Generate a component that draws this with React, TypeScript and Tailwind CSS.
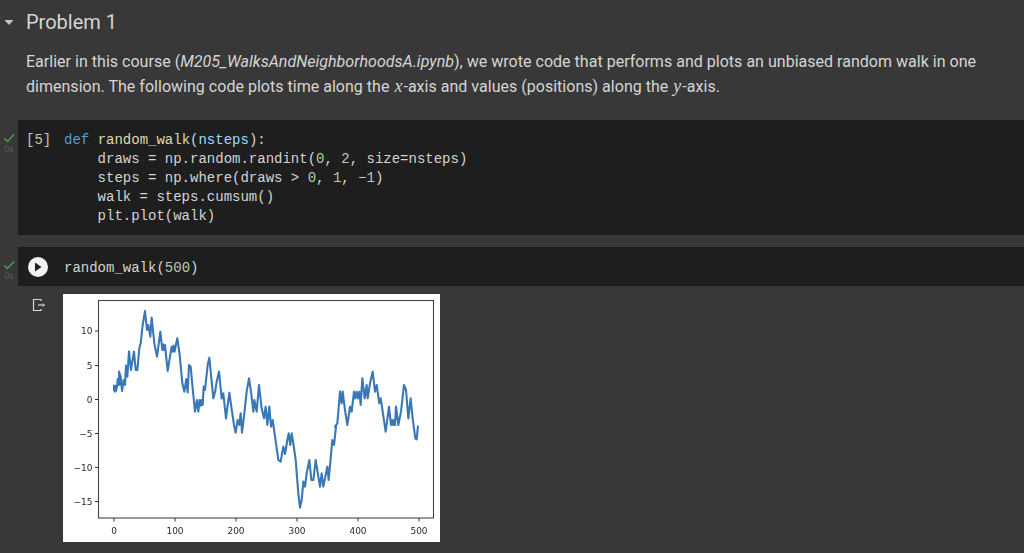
import React from "react";

type P = [number, number];
const z = (ox: number, oy: number, pts: P[]): P[] => pts.map(([x, y]) => [ox + x / 3, oy + y / 3]);

const walk: P[] = [
  ...z(105, 305, [[27,258],[27,242],[30,260],[33,242],[33,258],[37,240],[38,222],[43,240],[42,200],[47,215],[51,258],[56,225],[60,240],[63,182],[67,215],[72,140],[78,195],[82,170],[87,140],[92,195],[97,195],[103,130],[107,115],[113,60],[120,18],[126,75],[130,60],[136,95],[140,38],[148,115],[156,155],[166,80],[172,135],[175,118],[178,135],[180,120],[188,198],[195,155],[200,125],[203,140],[206,122],[209,140],[212,122],[217,100],[224,150],[232,235],[238,260],[244,222],[248,262],[252,180],[257,185],[263,250],[270,320],[276,285],[280,320],[284,285],[287,302],[290,285],[293,300],[296,245],[300,255],[308,180],[313,158],[320,230],[325,280],[330,262]]),
  ...z(190, 350, [[80,95],[87,65],[95,145],[100,130],[108,205],[118,128],[126,185],[132,225],[137,248],[143,210],[148,225],[152,190],[156,248],[163,190],[170,125],[177,85],[183,125],[190,185],[193,150],[200,185],[207,105],[215,175],[222,205],[227,170],[232,225],[238,170],[243,230],[248,210],[258,280],[265,330],[272,335],[280,290],[285,312],[292,270],[296,250],[301,285],[305,250],[310,280],[317,330]]),
  ...z(270, 410, [[85,250],[90,293],[95,270],[100,215],[105,230],[110,190],[118,150],[124,210],[130,210],[137,150],[145,200],[150,230],[155,190],[160,230],[165,205],[172,170],[176,210],[187,90],[192,105],[198,50]]),
  ...z(330, 360, [[15,200],[22,190],[30,95],[35,130],[38,95],[45,150],[52,195],[60,140],[65,155],[72,95],[76,115],[80,95],[84,115],[88,95],[92,135],[97,55],[104,115],[110,75],[113,115],[120,70],[128,35],[135,95],[140,75],[148,130],[152,115],[158,155],[167,215],[177,140],[183,195],[186,180],[189,195],[192,180],[195,195],[198,140],[205,195],[213,155],[222,75],[228,90],[235,175],[242,115],[248,175],[256,235],[260,238],[264,197]]),
];

const yTicks: [number, string][] = [[331, "10"], [365.5, "5"], [399.5, "0"], [433.5, "−5"], [467.5, "−10"], [501.5, "−15"]];
const xTicks: [number, string][] = [[114, "0"], [175, "100"], [236, "200"], [297, "300"], [358, "400"], [419, "500"]];

function Plot() {
  return (
    <svg viewBox="63 294 377 248" className="w-[377px] h-[248px] bg-white block" style={{ filter: "blur(0.4px)" }}>
      <rect x="98.5" y="300.5" width="335" height="217.5" fill="none" stroke="#444" strokeWidth="1.1" />
      {yTicks.map(([y, t]) => (
        <g key={t}>
          <line x1="95" x2="98.5" y1={y} y2={y} stroke="#333" strokeWidth="1" />
          <text x="92.5" y={y + 3.2} textAnchor="end" fontSize="9" fill="#2a2a2a" fontFamily="DejaVu Sans">{t}</text>
        </g>
      ))}
      {xTicks.map(([x, t]) => (
        <g key={t}>
          <line x1={x} x2={x} y1="518" y2="521.5" stroke="#333" strokeWidth="1" />
          <text x={x} y="534" textAnchor="middle" fontSize="9" fill="#2a2a2a" fontFamily="DejaVu Sans">{t}</text>
        </g>
      ))}
      <polyline points={walk.map((p) => p.join(",")).join(" ")} fill="none" stroke="#3a78b5" strokeWidth="2.1" strokeLinejoin="round" />
    </svg>
  );
}

function Status() {
  return (
    <div className="w-[18px] shrink-0 flex flex-col items-center pt-[13px]">
      <svg width="12" height="10" viewBox="0 0 12 10" fill="none">
        <path d="M1.5 5.5 L4.5 8.5 L11 1.5" stroke="#4caf50" strokeWidth="1.2" />
      </svg>
      <span className="text-[9px] leading-[10px] mt-[1px] text-[#5a5a5a] font-['Roboto',sans-serif]">0s</span>
    </div>
  );
}

const K = ({ c, children }: { c: string; children: React.ReactNode }) => <span className={c}>{children}</span>;

export default function App() {
  return (
    <div className="w-[1024px] h-[553px] overflow-hidden bg-[#383838] flex flex-col font-['Roboto',sans-serif]">
      <div className="h-[44px] shrink-0 flex items-center">
        <svg width="26" height="44" viewBox="0 0 26 44" className="shrink-0">
          <path d="M4.5 20 L13.5 20 L9 25 Z" fill="#c4c4c4" />
        </svg>
        <h1 className="text-[20px] text-[#d5d5d5] font-normal">Problem 1</h1>
      </div>
      <p className="pl-[26px] pt-[5px] text-[16px] leading-[25px] text-[#d5d5d5] whitespace-pre shrink-0 tracking-[0.02px]">
        Earlier in this course (<em>M205_WalksAndNeighborhoodsA.ipynb</em>), we wrote code that performs and plots an unbiased random walk in one{"\n"}
        dimension. The following code plots time along the <em className="font-['Liberation_Serif',serif] text-[18px] px-[1px]">x</em>-axis and values (positions) along the <em className="font-['Liberation_Serif',serif] text-[18px] px-[1px]">y</em>-axis.
      </p>

      <div className="flex mt-[21px] shrink-0">
        <Status />
        <div className="flex-1 bg-[#1e1e1e] h-[115px] flex pt-[11px] text-[14px] leading-[19px] text-[#d4d4d4] font-['Liberation_Mono',monospace]">
          <span className="w-[46px] pl-[8px] shrink-0 text-[#c4c4c4]">[5]</span>
          <pre className="font-['Liberation_Mono',monospace]">
            <K c="text-[#569cd6]">def</K> <K c="text-[#dcdcaa]">random_walk</K>(<K c="text-[#9cdcfe]">nsteps</K>):{"\n"}
            {"    "}draws = np.random.randint(<K c="text-[#b5cea8]">0</K>, <K c="text-[#b5cea8]">2</K>, size=nsteps){"\n"}
            {"    "}steps = np.where(draws &gt; <K c="text-[#b5cea8]">0</K>, <K c="text-[#b5cea8]">1</K>, <K c="text-[#b5cea8]">−1</K>){"\n"}
            {"    "}walk = steps.cumsum(){"\n"}
            {"    "}plt.plot(walk)
          </pre>
        </div>
      </div>

      <div className="flex mt-[12px] shrink-0">
        <Status />
        <div className="flex-1 bg-[#1e1e1e] h-[39px] flex items-center text-[14px] text-[#d4d4d4] font-['Liberation_Mono',monospace]">
          <div className="w-[46px] shrink-0 pl-[10px]">
            <div className="w-[20px] h-[20px] rounded-full bg-[#f2f2f2] flex items-center justify-center">
              <svg width="8" height="10" viewBox="0 0 8 10"><path d="M1 0.5 L7.5 5 L1 9.5 Z" fill="#1e1e1e" /></svg>
            </div>
          </div>
          <span className="pt-[3px]">random_walk(<K c="text-[#b5cea8]">500</K>)</span>
        </div>
      </div>

      <div className="flex mt-[8px] shrink-0">
        <div className="w-[63px] shrink-0 flex justify-center pl-[14px] pt-[3px]">
          <svg width="16" height="16" viewBox="0 0 16 16" fill="none" stroke="#d8d8d8" strokeWidth="1.2">
            <path d="M10 4 V2.5 H2.5 V13.5 H10 V12" />
            <path d="M7 8 H11" />
            <path d="M11.5 6 L14 8 L11.5 10 Z" fill="#d8d8d8" stroke="none" />
          </svg>
        </div>
        <Plot />
      </div>
    </div>
  );
}
